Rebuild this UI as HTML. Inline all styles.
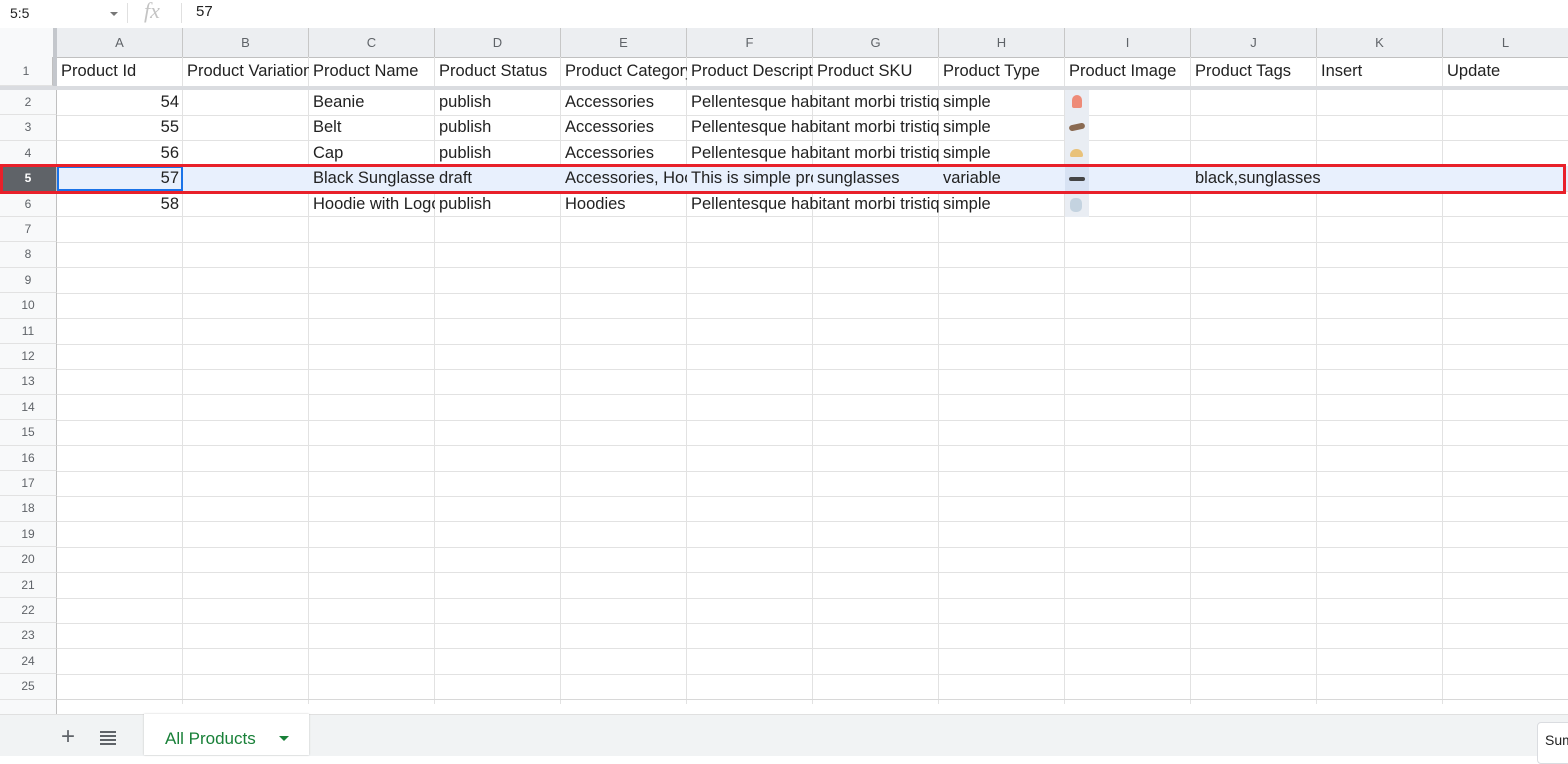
<!DOCTYPE html>
<html><head><meta charset="utf-8"><style>
body{margin:0;width:1568px;height:755px;overflow:hidden;background:#fff;font-family:"Liberation Sans",Arial,sans-serif;position:relative}
.a{position:absolute}
.fb{left:0;top:0;width:1568px;height:28px;border-bottom:1px solid #e0e0e0;background:#fff}
.ch{left:0;top:28px;width:1568px;height:29px;background:#f8f9fa;border-bottom:1px solid #c0c0c0}
.hl{position:absolute;top:28px;height:29px;width:126px;border-right:1px solid #c7c7c7;box-sizing:border-box;text-align:center;line-height:30px;font-size:13px;color:#5f6368;background:#eceef1}
.rh{position:absolute;left:0;width:57px;text-align:center;font-size:12px;color:#5f6368;background:#f8f9fa;border-right:1px solid #c0c0c0;border-bottom:1px solid #e2e2e2;box-sizing:border-box}
.vl{position:absolute;top:57px;height:647px;width:1px;background:#e2e2e2}
.hr{position:absolute;left:57px;width:1511px;height:1px;background:#e2e2e2}
.c{position:absolute;font-size:16.5px;color:#222;white-space:nowrap;overflow:hidden;width:122px;padding-left:4px}
.r{text-align:right;padding:0 4px 0 0}
</style></head><body>
<div class="a fb"></div>
<div class="a" style="left:10px;top:5px;font-size:14px;color:#222">5:5</div>
<div class="a" style="left:110px;top:12px;width:0;height:0;border-left:4px solid transparent;border-right:4px solid transparent;border-top:4px solid #777"></div>
<div class="a" style="left:127px;top:3px;width:1px;height:20px;background:#e0e0e0"></div>
<div class="a" style="left:144px;top:-2px;font-family:'Liberation Serif',serif;font-style:italic;font-size:22px;color:#c4c4c4">fx</div>
<div class="a" style="left:181px;top:3px;width:1px;height:20px;background:#e0e0e0"></div>
<div class="a" style="left:196px;top:3px;font-size:15px;color:#222">57</div>

<div class="a ch"></div>
<div class="a" style="left:0;top:28px;width:53px;height:29px;background:#f8f9fa"></div>
<div class="a" style="left:53px;top:28px;width:4px;height:62px;background:#c4c7cc"></div>
<div class="hl" style="left:57px">A</div><div class="hl" style="left:183px">B</div><div class="hl" style="left:309px">C</div><div class="hl" style="left:435px">D</div><div class="hl" style="left:561px">E</div><div class="hl" style="left:687px">F</div><div class="hl" style="left:813px">G</div><div class="hl" style="left:939px">H</div><div class="hl" style="left:1065px">I</div><div class="hl" style="left:1191px">J</div><div class="hl" style="left:1317px">K</div><div class="hl" style="left:1443px">L</div>

<div class="vl" style="left:182px"></div><div class="vl" style="left:308px"></div><div class="vl" style="left:434px"></div><div class="vl" style="left:560px"></div><div class="vl" style="left:686px"></div><div class="vl" style="left:812px"></div><div class="vl" style="left:938px"></div><div class="vl" style="left:1064px"></div><div class="vl" style="left:1190px"></div><div class="vl" style="left:1316px"></div><div class="vl" style="left:1442px"></div>

<div class="rh" style="top:57px;height:29px;line-height:28px;width:53px">1</div>
<div class="a" style="left:0;top:86px;width:1568px;height:4px;background:#dadce0"></div>
<div class="c" style="left:57px;top:62px">Product Id</div>
<div class="c" style="left:183px;top:62px">Product Variation</div>
<div class="c" style="left:309px;top:62px">Product Name</div>
<div class="c" style="left:435px;top:62px">Product Status</div>
<div class="c" style="left:561px;top:62px">Product Category</div>
<div class="c" style="left:687px;top:62px">Product Description</div>
<div class="c" style="left:813px;top:62px">Product SKU</div>
<div class="c" style="left:939px;top:62px">Product Type</div>
<div class="c" style="left:1065px;top:62px">Product Image</div>
<div class="c" style="left:1191px;top:62px">Product Tags</div>
<div class="c" style="left:1317px;top:62px">Insert</div>
<div class="c" style="left:1443px;top:62px">Update</div>

<div class="hr" style="top:115px"></div><div class="hr" style="top:140px"></div><div class="hr" style="top:166px"></div><div class="hr" style="top:191px"></div><div class="hr" style="top:216px"></div><div class="hr" style="top:242px"></div><div class="hr" style="top:267px"></div><div class="hr" style="top:293px"></div><div class="hr" style="top:318px"></div><div class="hr" style="top:344px"></div><div class="hr" style="top:369px"></div><div class="hr" style="top:394px"></div><div class="hr" style="top:420px"></div><div class="hr" style="top:445px"></div><div class="hr" style="top:471px"></div><div class="hr" style="top:496px"></div><div class="hr" style="top:521px"></div><div class="hr" style="top:547px"></div><div class="hr" style="top:572px"></div><div class="hr" style="top:598px"></div><div class="hr" style="top:623px"></div><div class="hr" style="top:648px"></div><div class="hr" style="top:674px"></div><div class="hr" style="top:699px;left:0;width:1568px;background:#d8d8d8"></div>

<div class="rh" style="top:90px;height:25.4px;line-height:24px">2</div>
<div class="rh" style="top:115.4px;height:25.4px;line-height:24px">3</div>
<div class="rh" style="top:140.8px;height:25.4px;line-height:24px">4</div>
<div class="rh" style="top:166.2px;height:25.4px;line-height:24px;background:#5f6368;color:#fff;font-weight:bold">5</div>
<div class="rh" style="top:191.6px;height:25.4px;line-height:24px">6</div>
<div class="rh" style="top:217px;height:25.4px;line-height:24px">7</div>
<div class="rh" style="top:242.4px;height:25.4px;line-height:24px">8</div>
<div class="rh" style="top:267.8px;height:25.4px;line-height:24px">9</div>
<div class="rh" style="top:293.2px;height:25.4px;line-height:24px">10</div>
<div class="rh" style="top:318.6px;height:25.4px;line-height:24px">11</div>
<div class="rh" style="top:344px;height:25.4px;line-height:24px">12</div>
<div class="rh" style="top:369.4px;height:25.4px;line-height:24px">13</div>
<div class="rh" style="top:394.8px;height:25.4px;line-height:24px">14</div>
<div class="rh" style="top:420.2px;height:25.4px;line-height:24px">15</div>
<div class="rh" style="top:445.6px;height:25.4px;line-height:24px">16</div>
<div class="rh" style="top:471px;height:25.4px;line-height:24px">17</div>
<div class="rh" style="top:496.4px;height:25.4px;line-height:24px">18</div>
<div class="rh" style="top:521.8px;height:25.4px;line-height:24px">19</div>
<div class="rh" style="top:547.2px;height:25.4px;line-height:24px">20</div>
<div class="rh" style="top:572.6px;height:25.4px;line-height:24px">21</div>
<div class="rh" style="top:598px;height:25.4px;line-height:24px">22</div>
<div class="rh" style="top:623.4px;height:25.4px;line-height:24px">23</div>
<div class="rh" style="top:648.8px;height:25.4px;line-height:24px">24</div>
<div class="rh" style="top:674.2px;height:25.4px;line-height:24px">25</div>
<div class="rh" style="top:699.6px;height:14px;border-bottom:none"></div>

<div class="a" style="left:57px;top:166px;width:1511px;height:25px;background:#e8f0fd"></div>
<div class="a" style="left:57px;top:166px;width:122px;height:21px;border:2px solid #1a73e8"></div>

<div class="a" style="left:1065px;top:90px;width:24px;height:127px;background:#e9edf3"></div>
<div class="a" style="left:1065px;top:166px;width:24px;height:25px;background:#d7e2f3"></div>
<div class="a" style="left:1072px;top:95px;width:10px;height:13px;background:#ee8b78;border-radius:5px 5px 2px 2px"></div>
<div class="a" style="left:1069px;top:124px;width:16px;height:6px;background:#8a6a52;border-radius:3px;transform:rotate(-12deg)"></div>
<div class="a" style="left:1070px;top:149px;width:13px;height:8px;background:#e9c27a;border-radius:7px 7px 2px 2px"></div>
<div class="a" style="left:1069px;top:177px;width:16px;height:4px;background:#444;border-radius:2px"></div>
<div class="a" style="left:1070px;top:198px;width:12px;height:14px;background:#c4d3e0;border-radius:5px"></div>

<div class="c r" style="left:57px;top:93px">54</div><div class="c" style="left:309px;top:93px">Beanie</div><div class="c" style="left:435px;top:93px">publish</div><div class="c" style="left:561px;top:93px">Accessories</div><div class="c" style="left:687px;top:93px;width:248px">Pellentesque habitant morbi tristique</div><div class="c" style="left:939px;top:93px">simple</div>
<div class="c r" style="left:57px;top:118px">55</div><div class="c" style="left:309px;top:118px">Belt</div><div class="c" style="left:435px;top:118px">publish</div><div class="c" style="left:561px;top:118px">Accessories</div><div class="c" style="left:687px;top:118px;width:248px">Pellentesque habitant morbi tristique</div><div class="c" style="left:939px;top:118px">simple</div>
<div class="c r" style="left:57px;top:144px">56</div><div class="c" style="left:309px;top:144px">Cap</div><div class="c" style="left:435px;top:144px">publish</div><div class="c" style="left:561px;top:144px">Accessories</div><div class="c" style="left:687px;top:144px;width:248px">Pellentesque habitant morbi tristique</div><div class="c" style="left:939px;top:144px">simple</div>
<div class="c r" style="left:57px;top:169px">57</div><div class="c" style="left:309px;top:169px">Black Sunglasses</div><div class="c" style="left:435px;top:169px">draft</div><div class="c" style="left:561px;top:169px">Accessories, Hoodies</div><div class="c" style="left:687px;top:169px">This is simple product</div><div class="c" style="left:813px;top:169px">sunglasses</div><div class="c" style="left:939px;top:169px">variable</div><div class="c" style="left:1191px;top:169px;width:200px">black,sunglasses</div>
<div class="c r" style="left:57px;top:195px">58</div><div class="c" style="left:309px;top:195px">Hoodie with Logo</div><div class="c" style="left:435px;top:195px">publish</div><div class="c" style="left:561px;top:195px">Hoodies</div><div class="c" style="left:687px;top:195px;width:248px">Pellentesque habitant morbi tristique</div><div class="c" style="left:939px;top:195px">simple</div>

<div class="a" style="left:0;top:164px;width:1560px;height:24px;border:3px solid #e8202a"></div>

<div class="a" style="left:0;top:714px;width:1568px;height:41px;background:#f1f3f4;border-top:1px solid #e0e0e0"></div>
<div class="a" style="left:61px;top:725px;font-size:24px;color:#5f6368;line-height:24px">+</div>
<div class="a" style="left:100px;top:731px;width:16px;height:14px;background:repeating-linear-gradient(#5f6368 0 2px,transparent 2px 4px)"></div>
<div class="a" style="left:144px;top:714px;width:165px;height:41px;background:#fff;box-shadow:0 0 2px rgba(0,0,0,.2)"></div>
<div class="a" style="left:165px;top:729px;font-size:17px;color:#188038">All Products</div>
<div class="a" style="left:279px;top:736px;width:0;height:0;border-left:5px solid transparent;border-right:5px solid transparent;border-top:5px solid #188038"></div>
<div class="a" style="left:1537px;top:722px;width:40px;height:40px;background:#fff;border:1px solid #dadce0;border-radius:4px"></div>
<div class="a" style="left:1545px;top:732px;font-size:14px;color:#222">Sum</div>
</body></html>
